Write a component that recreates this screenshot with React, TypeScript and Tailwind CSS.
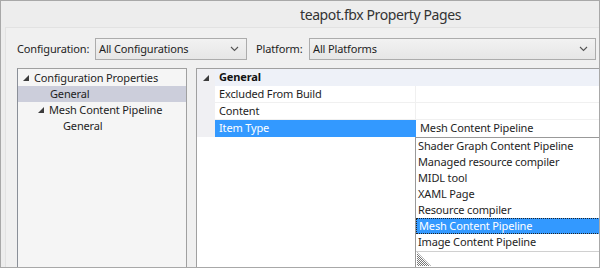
import React from "react";

const font = { fontFamily: '"Noto Sans", "Open Sans", sans-serif' };

function Chevron() {
  return (
    <svg width="9" height="6" viewBox="0 0 9 6" className="shrink-0">
      <polyline points="1,1 4.5,4.5 8,1" fill="none" stroke="#555" strokeWidth="1.1" />
    </svg>
  );
}

function Tri() {
  return (
    <svg width="6" height="6" viewBox="0 0 6 6" className="shrink-0">
      <polygon points="6,0 6,6 0,6" fill="#3c3c3c" />
    </svg>
  );
}

function Combo({ text, className }: { text: string; className: string }) {
  return (
    <div
      className={`flex h-[22px] items-center justify-between border border-[#acacac] bg-gradient-to-b from-[#f2f2f2] to-[#e6e6e6] pl-[3px] pr-[7px] text-[#1e1e1e] ${className}`}
    >
      <span>{text}</span>
      <Chevron />
    </div>
  );
}

function Grip() {
  return (
    <svg width="14" height="14" viewBox="0 0 14 14">
      <defs>
        <pattern id="hatch" width="2" height="2" patternUnits="userSpaceOnUse">
          <rect width="1" height="1" fill="#777" />
          <rect x="1" y="1" width="1" height="1" fill="#777" />
        </pattern>
      </defs>
      <polygon points="0,0 14,14 0,14" fill="url(#hatch)" />
    </svg>
  );
}

export default function App() {
  const items = [
    "Shader Graph Content Pipeline",
    "Managed resource compiler",
    "MIDL tool",
    "XAML Page",
    "Resource compiler",
    "Mesh Content Pipeline",
    "Image Content Pipeline",
  ];
  return (
    <div
      style={font}
      className="relative flex h-[268px] w-[600px] flex-col overflow-hidden border border-[#a8a8a8] bg-[#ededed] text-[11px] tracking-[-0.15px] text-[#1e1e1e]"
    >
      <div className="h-[26px] shrink-0 pl-[299px] pt-[4px] text-[14px] leading-[19px] tracking-[-0.4px] text-[#333]">
        teapot.fbx Property Pages
      </div>
      <div className="ml-[4px] flex flex-1 flex-col border-l border-t border-[#e2e2e2] bg-[#f0f0f0]">
        <div className="mt-[10px] flex h-[22px] items-center">
          <span className="ml-[11px] w-[78px]">Configuration:</span>
          <Combo text="All Configurations" className="w-[152px]" />
          <span className="ml-[9px] w-[53px]">Platform:</span>
          <Combo text="All Platforms" className="w-[287px]" />
        </div>
        <div className="mt-[8px] flex flex-1">
          <div className="ml-[11px] w-[170px] border-l border-t border-r border-[#a0a0a0] border-l-[#8a8f98] bg-[#f5f5f5] pt-[1px]">
            <div className="flex h-[16px] items-center gap-[5px] pl-[5px]">
              <Tri />
              <span>Configuration Properties</span>
            </div>
            <div className="flex h-[16px] items-center bg-[#cccedb] pl-[32px]">General</div>
            <div className="flex h-[16px] items-center gap-[5px] pl-[20px]">
              <Tri />
              <span>Mesh Content Pipeline</span>
            </div>
            <div className="flex h-[16px] items-center pl-[45px]">General</div>
          </div>
          <div className="ml-[9px] flex-1 border-l border-t border-[#a0a0a0] bg-white">
            <div className="flex">
              <div className="w-[18px] bg-[#f0f0f3]">
                <div className="flex h-[17px] items-center justify-center">
                  <Tri />
                </div>
              </div>
              <div className="flex-1">
                <div className="flex h-[17px] items-center bg-[#eef1f8] pl-[4px] font-bold text-[#111]">General</div>
                {["Excluded From Build", "Content"].map((t) => (
                  <div key={t} className="flex h-[17px] border-b border-[#f0f0f0]">
                    <div className="flex w-[201px] items-center border-r border-[#f0f0f0] pl-[4px]">{t}</div>
                    <div className="flex-1" />
                  </div>
                ))}
                <div className="flex h-[17px]">
                  <div className="flex w-[201px] items-center bg-[#3399ff] pl-[4px] text-white">Item Type</div>
                  <div className="flex flex-1 items-center pl-[4px]">Mesh Content Pipeline</div>
                </div>
              </div>
            </div>
          </div>
        </div>
      </div>
      <div className="absolute left-[414px] top-[136px] w-[186px] border border-[#999] bg-white">
        <div>
          {items.map((t) => (
            <div
              key={t}
              className={`flex h-[16px] items-center pl-[2px] ${
                t === "Mesh Content Pipeline"
                  ? "border border-dotted border-[#222] bg-[#3399ff] pl-[1px] text-white"
                  : ""
              }`}
            >
              {t}
            </div>
          ))}
        </div>
        <div className="mt-[1px] h-[16px] border-t border-[#d0d0d0] pl-[1px]">
          <Grip />
        </div>
      </div>
    </div>
  );
}
